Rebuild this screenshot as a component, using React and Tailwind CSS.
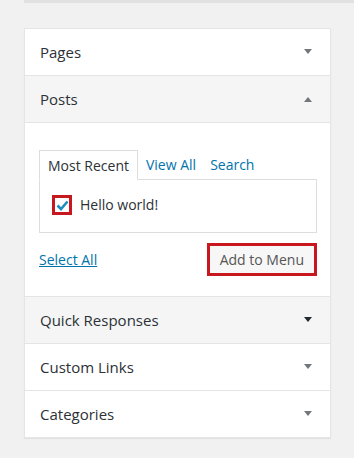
import React from "react";

function Arrow({ up, dark }) {
  return (
    <svg width="10" height="6" viewBox="0 0 10 6" className="shrink-0">
      {up ? (
        <path d="M1 6 L5 1 L9 6 Z" fill={dark ? "#23282d" : "#72777c"} />
      ) : (
        <path d="M1 0 L9 0 L5 5 Z" fill={dark ? "#23282d" : "#72777c"} />
      )}
    </svg>
  );
}

function Section({ title, up, dark, grey, first }) {
  return (
    <div
      className={`flex items-center justify-between pl-[15px] pr-[17px] ${
        first ? "h-[46px]" : "h-[47px] border-t border-[#e5e5e5]"
      } ${grey ? "bg-[#f5f5f5]" : "bg-white"}`}
    >
      <span className="text-[15px] text-[#2c3136]">{title}</span>
      <Arrow up={up} dark={dark} />
    </div>
  );
}

export default function App() {
  return (
    <div
      className="w-[354px] h-[458px] bg-[#f1f1f1] overflow-hidden"
      style={{ fontFamily: '"Open Sans", "Noto Sans", sans-serif' }}
    >
      {/* top strip */}
      <div className="ml-[24px] h-[3px] bg-[#e1e1e1]" />

      <div className="ml-[24px] mt-[25px] w-[307px] border border-[#e5e5e5] shadow-[0_1px_1px_rgba(0,0,0,0.06)] bg-white">
        <Section title="Pages" first />
        <Section title="Posts" up grey />

        {/* Posts body */}
        <div className="border-t border-[#e5e5e5] bg-white pt-[26px] pb-[20px] pl-[14px] pr-[13px]">
          <div className="flex items-end text-[14px]">
            <div className="relative z-10 -mb-px border border-[#ddd] border-b-white bg-white px-[8px] h-[30px] flex items-center text-[#2c3136]">
              Most Recent
            </div>
            <span className="pl-[8px] pr-[12px] h-[30px] flex items-center text-[#0073aa]">View All</span>
            <span className="px-[2px] h-[30px] flex items-center text-[#0073aa]">Search</span>
          </div>
          <div className="border border-[#ddd] h-[54px] flex items-start pt-[15px] px-[12px]">
            <div className="w-[20px] h-[20px] border-[3px] border-[#c8171f] bg-white flex items-center justify-center">
              <svg width="13" height="11" viewBox="0 0 13 11">
                <path d="M1.5 5.5 L5 9 L11.5 1.5" fill="none" stroke="#1e8cbe" strokeWidth="2.6" />
              </svg>
            </div>
            <span className="ml-[8px] text-[14px] leading-[20px] text-[#2c3136]">Hello world!</span>
          </div>

          <div className="flex items-center justify-between mt-[10px]">
            <span className="text-[14px] text-[#0073aa] underline">Select All</span>
            <div className="h-[33px] px-[10px] border-[3px] border-[#c8171f] bg-[#f7f7f7] flex items-center text-[14px] text-[#555]">
              Add to Menu
            </div>
          </div>
        </div>

        <Section title="Quick Responses" dark grey />
        <Section title="Custom Links" />
        <Section title="Categories" />
      </div>
    </div>
  );
}
